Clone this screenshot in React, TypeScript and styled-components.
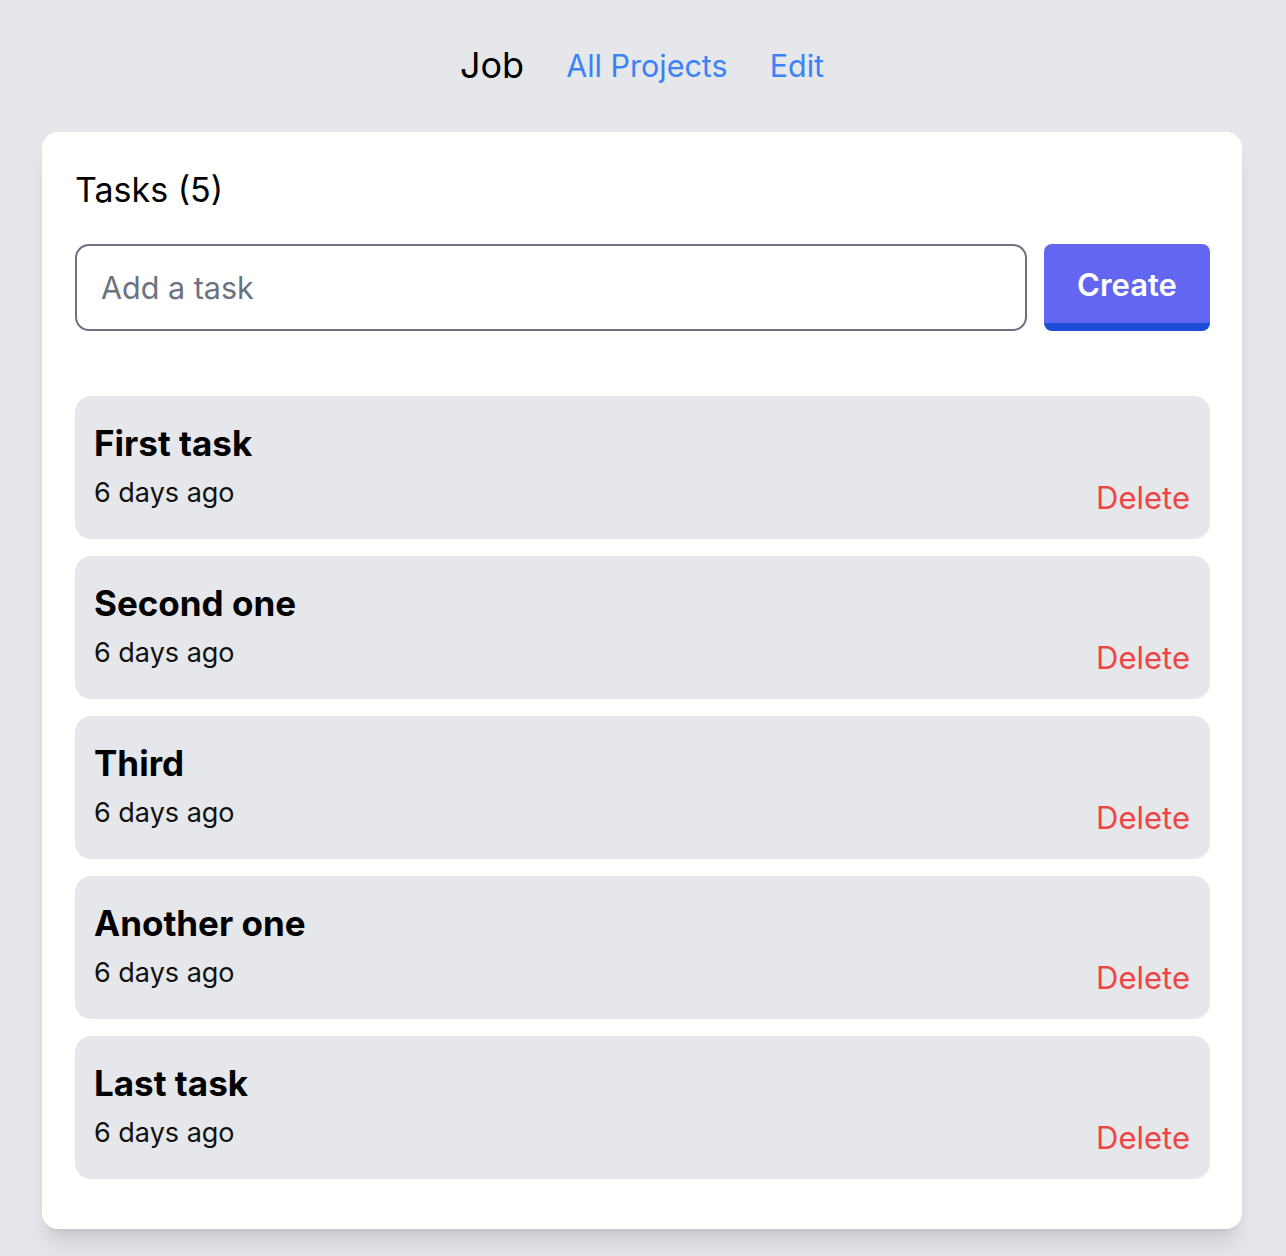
import React, { useState } from 'react';
import styled, { createGlobalStyle } from 'styled-components';

interface Task {
  id: number;
  title: string;
  createdAt: string;
}

const GlobalStyle = createGlobalStyle`
  html, body {
    margin: 0;
    padding: 0;
    background: #e5e7eb;
    font-family: Inter, "Noto Sans", sans-serif;
    -webkit-font-smoothing: antialiased;
  }
  * {
    box-sizing: border-box;
  }
`;

const Page = styled.div`
  min-height: 1256px;
  padding: 0 44px 28px 42px;
`;

const Header = styled.nav`
  height: 132px;
  display: flex;
  align-items: center;
  justify-content: center;
  gap: 42px;
  padding-bottom: 2px;
`;

const ProjectName = styled.h1`
  margin: 0;
  font-size: 36px;
  font-weight: 400;
  color: #000;
`;

const NavLink = styled.a`
  font-size: 30.5px;
  color: #3b82f6;
  text-decoration: none;
  cursor: pointer;
`;

const Card = styled.main`
  background: #fff;
  border-radius: 16px;
  padding: 32px 32px 50px 33px;
  box-shadow: 0 20px 25px -5px rgba(0, 0, 0, 0.1), 0 8px 10px -6px rgba(0, 0, 0, 0.1);
`;

const Title = styled.h2`
  margin: 0 0 28px;
  font-size: 34px;
  font-weight: 400;
  line-height: 52px;
  color: #000;
`;

const Form = styled.form`
  display: flex;
  gap: 17px;
  margin-bottom: 65px;
`;

const Input = styled.input`
  flex: 1;
  height: 87px;
  padding: 0 24px;
  border: 2px solid #6b7280;
  border-radius: 14px;
  font-family: inherit;
  font-size: 30.5px;
  color: #111827;
  outline: none;

  &::placeholder {
    color: #6b7280;
  }
`;

const CreateButton = styled.button`
  width: 166px;
  height: 87px;
  padding-top: 2px;
  border: none;
  border-bottom: 8px solid #1d4ed8;
  border-radius: 8px;
  background: #6366f1;
  color: #fff;
  font-family: inherit;
  font-size: 31px;
  font-weight: 600;
  cursor: pointer;
`;

const TaskList = styled.ul`
  list-style: none;
  margin: 0;
  padding: 0;
  display: flex;
  flex-direction: column;
  gap: 17px;
`;

const TaskItem = styled.li`
  height: 143px;
  background: #e5e7eb;
  border-radius: 16px;
  padding: 22px 20px 23px 19px;
  display: flex;
  justify-content: space-between;
  align-items: flex-end;
`;

const TaskInfo = styled.div`
  display: flex;
  flex-direction: column;
  align-self: flex-start;
`;

const TaskTitle = styled.h3`
  margin: 0;
  font-size: 35px;
  font-weight: 700;
  line-height: 50px;
  color: #000;
`;

const TaskDate = styled.span`
  font-size: 27px;
  line-height: 50px;
  color: #111;
`;

const DeleteButton = styled.button`
  background: none;
  border: none;
  padding: 0;
  font-family: inherit;
  font-size: 31px;
  color: #ef4444;
  cursor: pointer;
`;

const initialTasks: Task[] = [
  { id: 1, title: 'First task', createdAt: '6 days ago' },
  { id: 2, title: 'Second one', createdAt: '6 days ago' },
  { id: 3, title: 'Third', createdAt: '6 days ago' },
  { id: 4, title: 'Another one', createdAt: '6 days ago' },
  { id: 5, title: 'Last task', createdAt: '6 days ago' },
];

const App: React.FC = () => {
  const [tasks] = useState<Task[]>(initialTasks);
  const [text, setText] = useState('');

  return (
    <>
      <GlobalStyle />
      <Page>
        <Header>
          <ProjectName>Job</ProjectName>
          <NavLink>All Projects</NavLink>
          <NavLink>Edit</NavLink>
        </Header>

        <Card>
          <Title>Tasks ({tasks.length})</Title>

          <Form onSubmit={e => e.preventDefault()}>
            <Input
              placeholder="Add a task"
              value={text}
              onChange={e => setText(e.target.value)}
            />
            <CreateButton type="submit">Create</CreateButton>
          </Form>

          <TaskList>
            {tasks.map(task => (
              <TaskItem key={task.id}>
                <TaskInfo>
                  <TaskTitle>{task.title}</TaskTitle>
                  <TaskDate>{task.createdAt}</TaskDate>
                </TaskInfo>
                <DeleteButton type="button">Delete</DeleteButton>
              </TaskItem>
            ))}
          </TaskList>
        </Card>
      </Page>
    </>
  );
};

export default App;
